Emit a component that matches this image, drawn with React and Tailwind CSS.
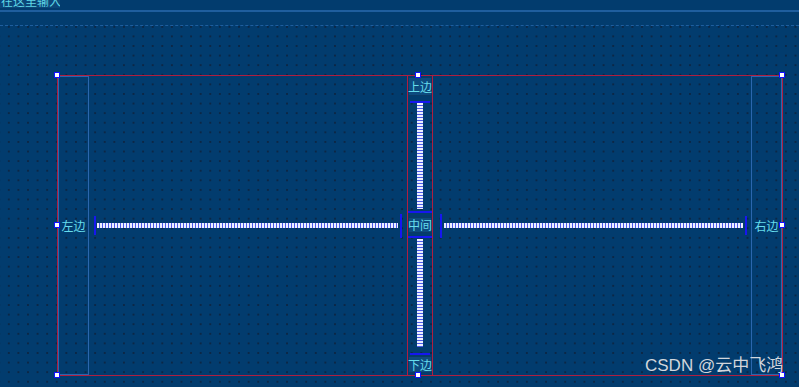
import React from "react";

const FONT = { fontFamily: '"Noto Sans CJK SC", "Noto Sans", sans-serif' };

function Handle({ cls }) {
  return <div className={`absolute w-[6px] h-[6px] bg-white border border-[#1010ff] z-20 ${cls}`} />;
}

const hStripes = "bg-[repeating-linear-gradient(90deg,#eef0ff_0px,#eef0ff_2px,#4a5ae8_2px,#4a5ae8_3px)]";
const vStripes = "bg-[repeating-linear-gradient(180deg,#eef0ff_0px,#eef0ff_2px,#4a5ae8_2px,#4a5ae8_3px)]";
const labelBox =
  "w-full shrink-0 bg-[#0d4a7e] border border-[#0a3a66] flex items-center justify-center text-[12px] leading-none whitespace-nowrap text-[#66dcec]";

export default function App() {
  return (
    <div className="relative w-[799px] h-[387px] overflow-hidden bg-[#023c6e] flex flex-col" style={FONT}>
      {/* top input strip */}
      <div className="h-[10px] shrink-0 flex items-start">
        <div className="mt-[-7px] w-[60px] h-[15px] bg-[#0b4678] text-[12px] leading-[15px] text-[#5fd6e6] pl-[1px] whitespace-nowrap overflow-hidden">
          在这里输入
        </div>
      </div>
      <div className="h-[2px] shrink-0 bg-[#1f5e9e]" />
      <div className="h-[13px] shrink-0" />
      <div className="shrink-0 border-t border-dashed border-[#1f5e9e]" />

      {/* design canvas with dot grid */}
      <div className="relative flex-1 bg-[radial-gradient(circle,#0c2746_0.9px,transparent_1.1px)] bg-[length:9.6px_9.6px] bg-[position:4px_-4px]">
        {/* outer frame */}
        <div className="absolute left-[57px] top-[49px] w-[726px] h-[301px] p-px flex">
          {/* red frame edges (overlay) */}
          <div className="absolute left-0 right-0 top-0 h-px bg-[#b01e40] z-10" />
          <div className="absolute left-0 right-0 bottom-0 h-px bg-[#b01e40] z-10" />
          <div className="absolute left-0 top-0 bottom-0 w-px bg-[#b01e40] z-10" />
          <div className="absolute right-0 top-0 bottom-0 w-px bg-[#b01e40] z-10" />

          {/* left panel */}
          <div className="w-[31px] shrink-0 border border-[#2b66ad] flex items-center justify-center text-[12px] leading-none whitespace-nowrap text-[#66dcec]">
            左边
          </div>

          {/* left splitter region */}
          <div className="w-[318px] shrink-0 flex items-center pl-[5px] gap-px">
            <div className="w-[2px] h-[19px] bg-[#1616f0]" />
            <div className={`w-[301px] h-[5px] ${hStripes}`} />
            <div className="ml-px w-[2px] h-[24px] bg-[#1616f0]" />
          </div>

          {/* center column */}
          <div className="relative w-[26px] shrink-0 flex flex-col items-center pt-px px-px">
            <div className="absolute left-0 top-[-1px] bottom-[-1px] w-px bg-[#b01e40] z-10" />
            <div className="absolute right-0 top-[-1px] bottom-[-1px] w-px bg-[#b01e40] z-10" />
            <div className={`h-[19px] ${labelBox}`}>上边</div>
            <div className="mt-[5px] w-[20px] h-[2px] bg-[#1616f0]" />
            <div className={`w-[6px] h-[106px] ${vStripes}`} />
            <div className="mt-[2px] w-full h-[2px] bg-[#1616f0]" />
            <div className={`mt-[4px] h-[16px] ${labelBox}`}>中间</div>
            <div className="mt-[3px] w-full h-[2px] bg-[#1616f0]" />
            <div className={`mt-px w-[6px] h-[108px] ${vStripes}`} />
            <div className="mt-[6px] w-[20px] h-[2px] bg-[#1616f0]" />
            <div className={`mt-px h-[17px] ${labelBox}`}>下边</div>
          </div>

          {/* right splitter region */}
          <div className="w-[318px] shrink-0 flex items-center pl-[7px] gap-px">
            <div className="w-[2px] h-[24px] bg-[#1616f0]" />
            <div className={`ml-px w-[299px] h-[5px] ${hStripes}`} />
            <div className="ml-px w-[2px] h-[19px] bg-[#1616f0]" />
          </div>

          {/* right panel */}
          <div className="w-[31px] shrink-0 border border-[#2b66ad] flex items-center justify-center text-[12px] leading-none whitespace-nowrap text-[#66dcec]">
            右边
          </div>
        </div>

        {/* selection handles */}
        <Handle cls="left-[54px] top-[46px]" />
        <Handle cls="left-[415px] top-[46px]" />
        <Handle cls="left-[779px] top-[46px]" />
        <Handle cls="left-[54px] top-[196px]" />
        <Handle cls="left-[779px] top-[196px]" />
        <Handle cls="left-[54px] top-[346px]" />
        <Handle cls="left-[415px] top-[346px]" />
        <Handle cls="left-[779px] top-[346px]" />

        {/* watermark */}
        <div
          className="absolute left-[645px] top-[329px] text-[17px] leading-[22px] text-[#d2d6dc] z-30 whitespace-nowrap"
          style={{ fontFamily: '"Liberation Sans", "Noto Sans CJK SC", sans-serif' }}
        >
          CSDN @云中飞鸿
        </div>
      </div>
    </div>
  );
}
